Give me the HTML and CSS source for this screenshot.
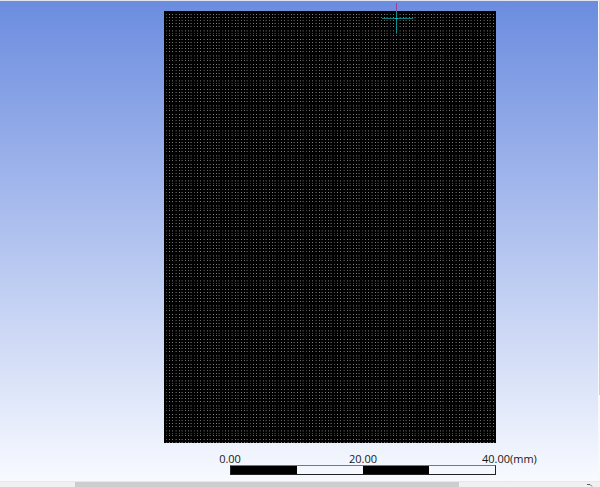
FILE: index.html
```
<!DOCTYPE html>
<html lang="en">
<head>
<meta charset="utf-8">
<title>Mesh view</title>
<link rel="stylesheet" href="styles.css">
</head>
<body>
<div class="window">
  <main class="stage">
    <div class="mesh">
      <svg class="mesh-dots" width="100%" height="100%" aria-hidden="true">
        <defs>
          <pattern id="dots" width="28" height="25" patternUnits="userSpaceOnUse" shape-rendering="crispEdges">
            <g id="row">
              <path stroke="#808080" d="M5 3.500h1M8 3.500h1M15 3.500h1M21 3.500h1M24 3.500h1"/>
              <path stroke="#505050" d="M2 3.500h1M12 3.500h1M18 3.500h1M27 3.500h1"/>
              <path stroke="#303030" d="M11 3.500h1M17 3.500h1M26 3.500h1"/>
            </g>
            <use href="#row" y="3"/>
            <use href="#row" y="6" opacity=".8"/>
            <use href="#row" y="9"/>
            <use href="#row" y="12"/>
            <use href="#row" y="16" opacity=".6"/>
            <use href="#row" y="17" opacity=".4"/>
            <use href="#row" y="19" opacity=".6"/>
            <use href="#row" y="21" opacity=".9"/>
          </pattern>
        </defs>
        <rect width="100%" height="100%" fill="url(#dots)"/>
      </svg>
      <svg class="cursor" width="32" height="30" viewBox="0 0 32 30" aria-hidden="true">
        <rect x="14" width="1" height="8" fill="#98408f"/>
        <rect x="14" y="8" width="1" height="22" fill="#089090"/>
        <rect y="15" width="31" height="1" fill="#087b7b"/>
        <rect x="13" y="15" width="3" height="1" fill="#18b0b0"/>
      </svg>
    </div>
    <div class="scale">
      <div class="labels">
        <span>0.00</span><span>20.00</span><span>40.00</span>
        <span class="unit">(mm)</span>
      </div>
      <div class="ruler"><i></i><i></i><i></i><i></i></div>
    </div>
  </main>
  <div class="side"><div class="side-thumb"></div></div>
  <div class="bottom">
    <div class="bottom-thumb"></div>
    <svg class="arrow" width="6" height="3" viewBox="0 0 6 3" aria-hidden="true"><path d="M0 .5h3l2 2" fill="none" stroke="#606060"/></svg>
  </div>
</div>
</body>
</html>
```
FILE: styles.css
```
* { box-sizing: border-box; }
body {
  margin: 0;
  font: 11px/14px "Open Sans", "Noto Sans", sans-serif;
  color: #181818;
}
.window {
  height: 100vh;
  overflow: hidden;
  display: grid;
  grid-template-columns: 1fr 2px;
  grid-template-rows: 1fr 6px;
  border-top: 1px solid #dfe3ed;
}
.stage {
  display: grid;
  grid-template-columns: 164fr 66fr 266fr 102fr;
  grid-template-rows: 1fr 38px;
  padding-top: 10px;
  background: linear-gradient(#6b8cdf, #f8faff);
}
.mesh {
  grid-column: 2 / 4;
  position: relative;
  background: #000;
}
.mesh-dots {
  position: absolute;
  inset: 0;
}
.cursor {
  position: absolute;
  left: round(down, 65.8%, 1px);
  top: -8px;
}
.scale {
  grid-column: 3;
  grid-row: 2;
  padding-top: 9px;
}
.labels {
  display: flex;
  justify-content: space-between;
  position: relative;
}
.labels span {
  width: 0;
  display: flex;
  justify-content: center;
}
.labels .unit {
  position: absolute;
  left: 100%;
  width: auto;
  margin-left: 14px;
}
.ruler {
  display: grid;
  grid-template-columns: repeat(4, 1fr);
  height: 10px;
  margin-top: -1px;
  border: 1px solid #222;
  border-top-color: #777;
}
.ruler i:nth-child(odd) { background: #000; }
.side {
  background: #f8f8f8;
  padding-left: 1px;
}
.side-thumb {
  height: 82%;
  background: #cdcdcd;
}
.bottom {
  grid-column: 1 / 3;
  display: flex;
  align-items: flex-end;
  background: #f0f0f0;
  border-top: 1px solid #e7e7e7;
}
.bottom-thumb {
  width: 64%;
  height: 100%;
  margin-left: 12.5%;
  background: #cdcdcd;
}
.arrow {
  margin-left: auto;
  margin-right: 7px;
}
```
